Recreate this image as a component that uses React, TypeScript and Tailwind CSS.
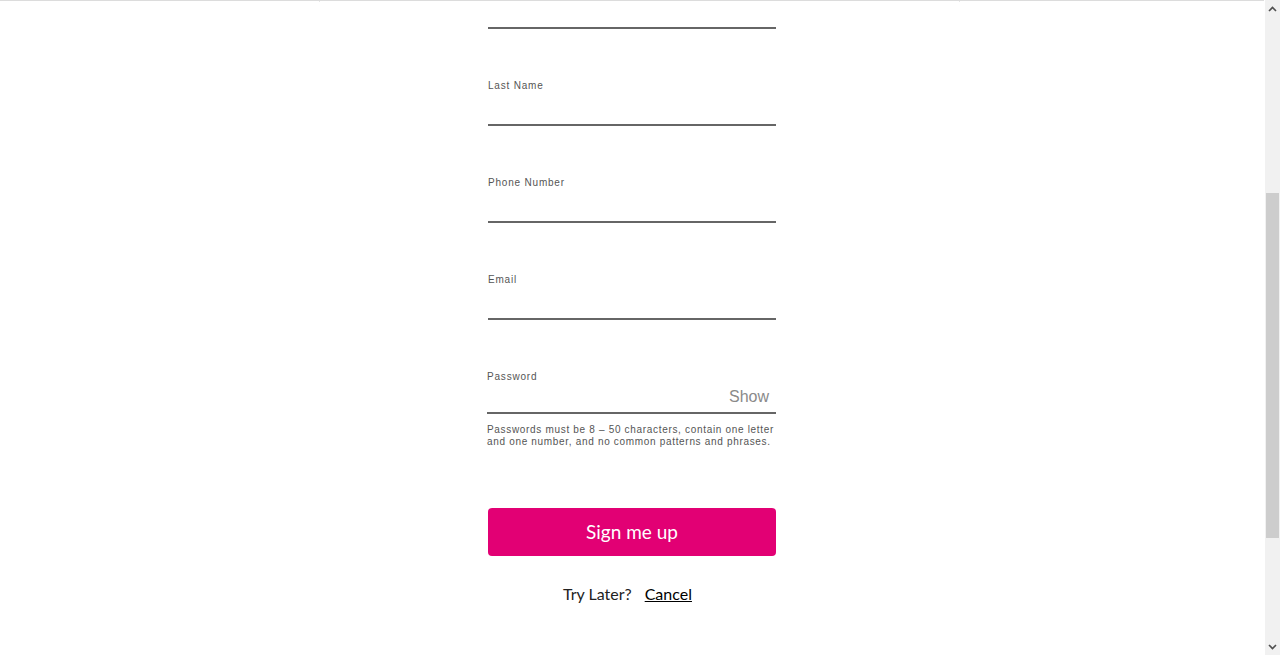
import React from "react";

const labelFont = { fontFamily: '"Liberation Sans", Arial, sans-serif' };
const uiFont = { fontFamily: 'Lato, "Noto Sans", sans-serif' };

function Field({ label, first }: { label: string; first?: boolean }) {
  if (first) {
    return <div className="h-[29px] border-b-2 border-[#666]" />;
  }
  return (
    <div className="mt-[50px]">
      <div
        className="h-[14px] text-[10px] leading-[14px] tracking-[0.08em] text-[#555]"
        style={labelFont}
      >
        {label}
      </div>
      <div className="h-[31px] border-b-2 border-[#666] box-content" />
    </div>
  );
}

function Scrollbar() {
  return (
    <div className="flex w-[15px] shrink-0 flex-col items-center bg-[#f1f1f1]">
      <div className="flex h-[17px] w-full items-center justify-center">
        <svg width="9" height="6" viewBox="0 0 9 6">
          <path d="M1 5 L4.5 1.5 L8 5" fill="none" stroke="#505050" strokeWidth="1.6" />
        </svg>
      </div>
      <div className="h-[176px]" />
      <div className="h-[345px] w-[13px] bg-[#cdcdcd]" />
      <div className="flex-1" />
      <div className="flex h-[17px] w-full items-center justify-center">
        <svg width="9" height="6" viewBox="0 0 9 6">
          <path d="M1 1 L4.5 4.5 L8 1" fill="none" stroke="#505050" strokeWidth="1.6" />
        </svg>
      </div>
    </div>
  );
}

export default function App() {
  return (
    <div className="flex h-[655px] w-full overflow-hidden bg-white">
      <div className="flex min-w-0 flex-1 flex-col pr-px">
        {/* top edge of the section above */}
        <div className="grid h-[2px] grid-cols-[320px_640px_1fr] border-t border-[#dcdcdc]">
          <div className="border-r border-[#e6e6e6]" />
          <div className="border-r border-[#e6e6e6]" />
          <div />
        </div>

        <div className="mx-auto flex w-[288px] flex-col -mt-[2px]">
          <Field label="First Name" first />
          <Field label="Last Name" />
          <Field label="Phone Number" />
          <Field label="Email" />

          {/* Password */}
          <div className="mt-[50px] -ml-px">
            <div
              className="h-[14px] text-[10px] leading-[14px] tracking-[0.08em] text-[#555]"
              style={labelFont}
            >
              Password
            </div>
            <div className="flex h-[28px] items-start justify-end border-b-2 border-[#666] box-content pr-[7px]">
              <span
                className="mt-[4px] text-[16px] leading-[18px] text-[#8a8a8a]"
                style={labelFont}
              >
                Show
              </span>
            </div>
            <p
              className="mt-[10px] whitespace-nowrap text-[10px] leading-[12px] tracking-[0.068em] text-[#555]"
              style={labelFont}
            >
              Passwords must be 8 – 50 characters, contain one letter
              <br />
              and one number, and no common patterns and phrases.
            </p>
          </div>

          <button
            className="mt-[60px] h-[48px] w-full rounded-[4px] bg-[#e20074] text-[19px] text-white"
            style={uiFont}
          >
            Sign me up
          </button>

          <div
            className="mt-[28px] flex items-center justify-center gap-[13px] pr-[9px] text-[16px] leading-[20px] text-[#222]"
            style={uiFont}
          >
            <span>Try Later?</span>
            <a className="text-black underline">Cancel</a>
          </div>
        </div>
      </div>
      <Scrollbar />
    </div>
  );
}
